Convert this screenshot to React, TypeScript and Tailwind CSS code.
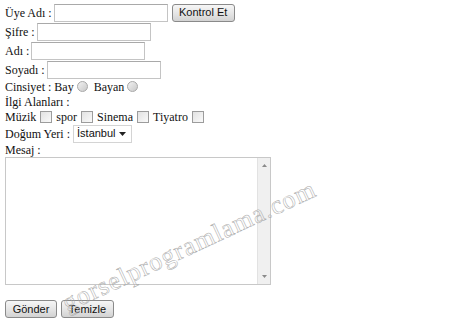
import React, { useState } from 'react';

const serif = "font-['Liberation_Serif','Times_New_Roman',serif]";
const sans = "font-['Liberation_Sans',Arial,sans-serif]";

const inputCls =
  'h-[18px] w-[114px] border border-[#c4c4c4] border-t-[#a9a9a9] bg-white px-1 text-[12px] outline-none';

const btnCls = `${sans} h-[18px] whitespace-nowrap rounded-[3px] border border-[#8a8a8a] bg-gradient-to-b from-[#f6f6f6] via-[#e6e6e6] to-[#d2d2d2] px-0 text-[11px] leading-none text-[#111]`;

const Radio: React.FC = () => (
  <span className="mx-[3px] inline-block h-[11px] w-[11px] rounded-full border border-[#a8a8a8] bg-gradient-to-br from-[#f2f2f2] to-[#c9c9c9]" />
);

const Check: React.FC = () => (
  <span className="mx-[4px] inline-block h-[12px] w-[12px] border border-[#9c9c9c] bg-gradient-to-br from-[#e2e2e2] to-[#fafafa]" />
);

const App: React.FC = () => {
  const [mesaj, setMesaj] = useState('');

  return (
    <div className={`${serif} relative h-[326px] w-[474px] overflow-hidden bg-white pl-[5px] pt-[3px] text-[12px] text-[#111]`}>
      <div className="flex h-[19px] items-center">
        <span>Üye Adı :</span>
        <input className={`${inputCls} ml-[2px]`} />
        <button className={`${btnCls} ml-[4px] w-[63px]`}>Kontrol Et</button>
      </div>
      <div className="flex h-[19px] items-center">
        <span>Şifre :</span>
        <input type="password" className={`${inputCls} ml-[2px]`} />
      </div>
      <div className="flex h-[19px] items-center">
        <span>Adı :</span>
        <input className={`${inputCls} ml-[2px]`} />
      </div>
      <div className="flex h-[19px] items-center">
        <span>Soyadı :</span>
        <input className={`${inputCls} ml-[2px]`} />
      </div>
      <div className="flex h-[15px] items-center">
        <span>Cinsiyet : Bay</span>
        <Radio />
        <span className="ml-[3px]">Bayan</span>
        <Radio />
      </div>
      <div className="flex h-[15px] items-center">İlgi Alanları :</div>
      <div className="flex h-[15px] items-center">
        <span>Müzik</span>
        <Check />
        <span>spor</span>
        <Check />
        <span>Sinema</span>
        <Check />
        <span>Tiyatro</span>
        <Check />
      </div>
      <div className="flex h-[19px] items-center">
        <span>Doğum Yeri :</span>
        <div className={`${sans} ml-[3px] flex h-[18px] w-[59px] items-center justify-between border border-[#d4d4d4] bg-white pl-[3px] pr-[5px] text-[11px]`}>
          <span>İstanbul</span>
          <svg width="7" height="4" viewBox="0 0 7 4">
            <path d="M0 0h7L3.5 4z" fill="#222" />
          </svg>
        </div>
      </div>
      <div className="flex h-[14px] items-center">Mesaj :</div>
      <div className="flex h-[128px] w-[266px] border border-[#c8c8c8] bg-white">
        <textarea
          value={mesaj}
          onChange={(e) => setMesaj(e.target.value)}
          className="flex-1 resize-none outline-none"
        />
        <div className="flex w-[13px] flex-col items-center justify-between border-l border-[#e2e2e2] bg-[#f0f0f0] py-[6px]">
          <svg width="5" height="3" viewBox="0 0 5 3">
            <path d="M0 3h5L2.5 0z" fill="#8a8a8a" />
          </svg>
          <svg width="5" height="3" viewBox="0 0 5 3">
            <path d="M0 0h5L2.5 3z" fill="#8a8a8a" />
          </svg>
        </div>
      </div>
      <div className="mt-[15px] flex gap-[4px]">
        <button className={`${btnCls} w-[52px]`}>Gönder</button>
        <button className={`${btnCls} w-[53px]`}>Temizle</button>
      </div>

      <div
        className={`${serif} pointer-events-none absolute left-[72px] top-[283px] origin-bottom-left -rotate-[25deg] whitespace-nowrap text-[26px] tracking-[1.1px] text-transparent [-webkit-text-stroke:0.5px_#a8a8a8]`}
      >
        gorselprogramlama.com
      </div>
    </div>
  );
};

export default App;
